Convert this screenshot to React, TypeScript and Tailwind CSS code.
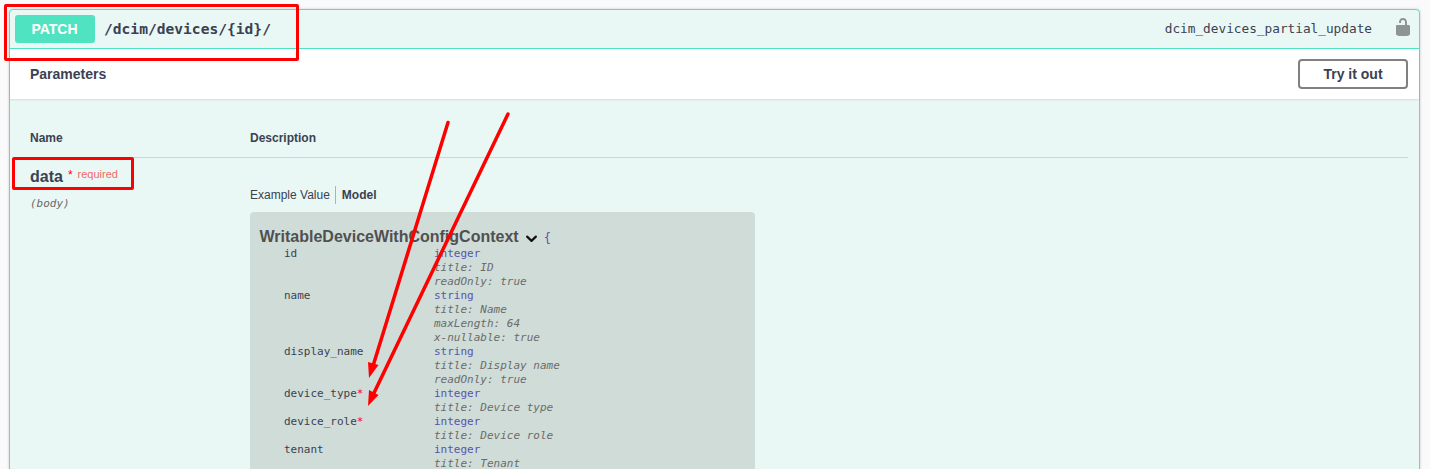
const sans = "font-['Liberation_Sans',Arial,sans-serif]";
const mono = "font-['DejaVu_Sans_Mono',monospace]";

type Prop = { name: string; required?: boolean; type: string; notes: string[] };

const props: Prop[] = [
  { name: "id", type: "integer", notes: ["title: ID", "readOnly: true"] },
  { name: "name", type: "string", notes: ["title: Name", "maxLength: 64", "x-nullable: true"] },
  { name: "display_name", type: "string", notes: ["title: Display name", "readOnly: true"] },
  { name: "device_type", required: true, type: "integer", notes: ["title: Device type"] },
  { name: "device_role", required: true, type: "integer", notes: ["title: Device role"] },
  { name: "tenant", type: "integer", notes: ["title: Tenant"] },
];

const PropRow = ({ prop }: { prop: Prop }) => (
  <div className="flex">
    <div className="w-[174px] pl-[24px] text-[#3b4151]">
      {prop.name}
      {prop.required && <span className="text-[#f00]">*</span>}
    </div>
    <div>
      <div className="text-[#55a]">{prop.type}</div>
      {prop.notes.map((n) => (
        <div key={n} className="italic text-[#6b6b6b]">
          {n}
        </div>
      ))}
    </div>
  </div>
);

const Annotations = () => (
  <>
    <div className="absolute left-[4px] top-[4px] w-[295px] h-[57px] border-[3px] border-[#f00] rounded-[2px]"></div>
    <div className="absolute left-[12px] top-[157px] w-[122px] h-[33px] border-[3px] border-[#f00] rounded-[2px]"></div>
    <svg className="absolute left-0 top-0" width="1430" height="469" viewBox="0 0 1430 469">
      <line x1="448" y1="122.5" x2="373" y2="366" stroke="#f00" strokeWidth="3.5" strokeLinecap="round" />
      <polygon points="369,378 368,362 378.5,365" fill="#f00" />
      <line x1="508" y1="114" x2="373" y2="395" stroke="#f00" strokeWidth="3.5" strokeLinecap="round" />
      <polygon points="368,406 369,390 378.5,395" fill="#f00" />
    </svg>
  </>
);

export default function App() {
  return (
    <div className={`relative h-[469px] w-[1430px] overflow-hidden bg-[#fafafa] pt-[9px] px-[9px] ${sans}`}>
      <div className="h-[480px] w-[1411px] rounded-[4px] border border-[#50e3c2] bg-[#e9f8f5] shadow-[0_0_3px_rgba(0,0,0,0.19)]">
        {/* Summary bar */}
        <div className="flex h-[39px] items-center border-b border-[#50e3c2] pl-[5px] pr-[6px]">
          <div className="flex h-[28px] w-[80px] items-center justify-center rounded-[3px] bg-[#50e3c2] pr-[1px] text-[14px] font-bold text-white">
            PATCH
          </div>
          <div className={`ml-[9px] text-[14.6px] font-bold text-[#3b4151] ${mono}`}>/dcim/devices/{"{id}"}/</div>
          <div className={`ml-auto text-[12.75px] text-[#3b4151] ${mono}`}>dcim_devices_partial_update</div>
          <svg className="-mt-[4px] ml-[21px]" width="20" height="20" viewBox="0 0 20 20" fill="#8e9494">
            <path d="M15.8 8H14V5.6C14 2.703 12.665 1 10 1 7.334 1 6 2.703 6 5.6V6h2v-.801C8 3.754 8.797 3 10 3c1.203 0 2 .754 2 2.199V8H4c-.553 0-1 .646-1 1.199V17c0 .549.428 1.139.951 1.307l1.197.387C5.672 18.861 6.55 19 7.1 19h5.8c.549 0 1.428-.139 1.951-.307l1.196-.387c.524-.167.953-.757.953-1.306V9.199C17 8.646 16.352 8 15.8 8z" />
          </svg>
        </div>

        {/* Parameters header */}
        <div className="flex h-[50px] items-center justify-between bg-white pl-[20px] pr-[11px] shadow-[0_1px_2px_rgba(0,0,0,0.1)]">
          <div className="text-[14px] font-bold text-[#3b4151]">Parameters</div>
          <button className="h-[30px] w-[110px] rounded-[4px] border-2 border-[#808080] text-[14px] font-bold text-[#3b4151]">
            Try it out
          </button>
        </div>

        {/* Table head */}
        <div className="ml-[20px] mr-[11px] mt-[29px] flex h-[30px] border-b border-[#c9d8d5] text-[12px] font-bold text-[#3b4151]">
          <div className="w-[220px] pt-[1px]">Name</div>
          <div className="pt-[1px]">Description</div>
        </div>

        {/* Body param */}
        <div className="mx-[20px] flex">
          <div className="w-[220px] pt-[9px]">
            <div className="flex items-start text-[#3b4151]">
              <span className="text-[16px] font-bold leading-[20px]">data</span>
              <span className="ml-[5px] text-[12px] leading-[16px] text-[#f00]">*</span>
              <span className="ml-[5px] text-[11px] leading-[14px] text-[#f06a6a]">required</span>
            </div>
            <div className={`mt-[10px] text-[11px] italic leading-[14px] text-[#6b6b6b] ${mono}`}>(body)</div>
          </div>
          <div>
            <div className="mt-[29px] flex h-[16px] items-center text-[12px] text-[#3b4151]">
              <span className="border-r border-[#a9b5b2] pr-[5px]">Example Value</span>
              <span className="pl-[6px] font-bold">Model</span>
            </div>
            <div className={`mt-[9px] h-[300px] w-[505px] rounded-[4px] bg-[#d0dcd8] pl-[10px] pt-[15px] text-[11px] leading-[14px] ${mono}`}>
              <div className="flex h-[20px] items-center">
                <span className={`-ml-[0.5px] text-[16px] font-bold text-[#505050] ${sans}`}>WritableDeviceWithConfigContext</span>
                <svg className="ml-[7px] mt-[2px]" width="11" height="11" viewBox="0 0 20 20" fill="#111">
                  <path d="M17.418 6.109c.272-.268.709-.268.979 0s.271.701 0 .969l-7.908 7.83c-.27.268-.707.268-.979 0l-7.908-7.83c-.27-.268-.27-.701 0-.969.271-.268.709-.268.979 0L10 13.25l7.418-7.141z" stroke="#111" strokeWidth="2.5" />
                </svg>
                <span className="ml-[7px] mt-[2px] text-[12px] text-[#55a]">{"{"}</span>
              </div>
              <div>
                {props.map((p) => (
                  <PropRow key={p.name} prop={p} />
                ))}
              </div>
            </div>
          </div>
        </div>
      </div>

      <Annotations />
    </div>
  );
}
